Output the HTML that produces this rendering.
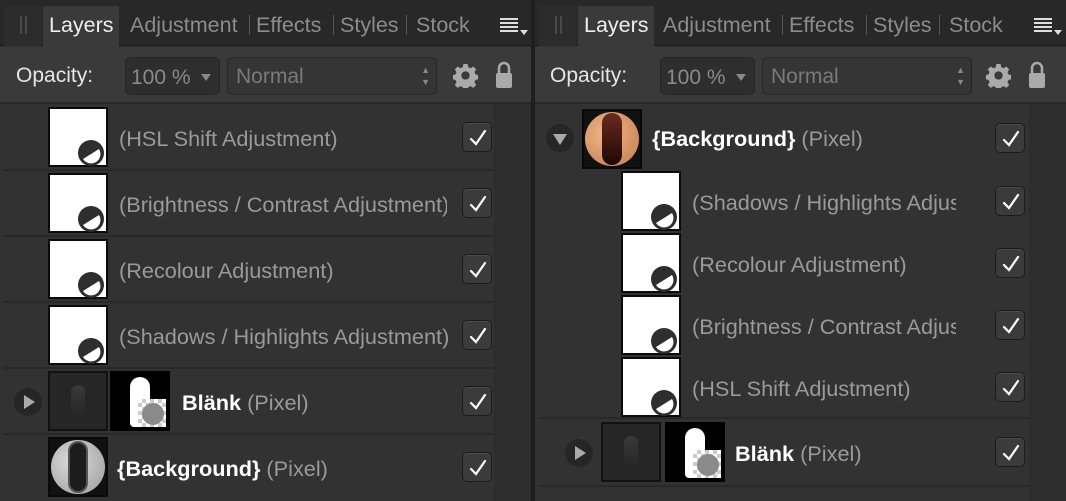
<!DOCTYPE html>
<html><head><meta charset="utf-8"><style>
*{margin:0;padding:0;box-sizing:border-box}
body{width:1066px;height:501px;background:#1e1e1e;font-family:"Liberation Sans",sans-serif;position:relative;overflow:hidden}
.panel{position:absolute;top:0;height:501px;width:531px;background:#323232}
.tabs{position:absolute;left:0;top:0;width:100%;height:46px;background:#282828;border-bottom:1px solid #1c1c1c}
.grip{position:absolute;left:4px;top:6px;width:38px;height:40px;background:#2c2c2c}
.grip:before,.grip:after{content:"";position:absolute;top:10px;width:2px;height:18px;background:#4a4a4a}
.grip:before{left:16px}.grip:after{left:21px}
.tab{position:absolute;top:13px;font-size:21.5px;color:#8c8c8c}
.active{position:absolute;left:43px;top:6px;width:76px;height:41px;background:#3a3a3a;color:#eee;font-size:21.5px;padding:7px 0 0 6px}
.sep{position:absolute;top:15px;width:1px;height:20px;background:#555}
.menu{position:absolute;top:18px;width:18px}
.menu i{display:block;height:2px;background:#ddd;margin-bottom:2px}
.tool{position:absolute;left:0;top:47px;width:100%;height:57px;background:#3a3a3a;border-bottom:2px solid #272727}
.lbl{position:absolute;left:16px;top:17px;font-size:21px;color:#e6e6e6}
.op{position:absolute;left:125px;top:10px;width:95px;height:38px;background:#2e2e2e;border:1px solid #252525;border-radius:5px;color:#8a8a8a;font-size:21px;padding:8px 0 0 5px}
.op:after{content:"";position:absolute;right:8px;top:16px;border:5px solid transparent;border-top:7px solid #888;border-bottom:0}
.bl{position:absolute;left:227px;top:10px;width:210px;height:38px;background:#353535;border:1px solid #262626;border-radius:5px;color:#7a7a7a;font-size:21px;padding:7px 0 0 8px}
.row{position:absolute;left:4px;width:490px;border-bottom:2px solid #282828}
.strip{position:absolute;left:494px;top:104px;width:37px;height:397px;background:#2d2d2d}
.th{position:absolute;width:60px;height:60px;background:#fff;border:2px solid #0a0a0a}
.th svg{position:absolute;left:27px;top:30px}
.t{position:absolute;font-size:21.7px;color:#9a9a9a;white-space:nowrap;overflow:hidden}
.b{color:#fff;font-weight:bold}
.cb{position:absolute;width:30px;height:30px;background:#3b3b3b;border:1px solid #1c1c1c;border-radius:5px;box-shadow:inset 0 1px 0 #4a4a4a}
.cb svg{position:absolute;left:5px;top:5px}
.tri{position:absolute;width:28px;height:28px;border-radius:50%;background:#262626}
.dk{position:absolute;width:60px;height:60px;background:#262626;border:2px solid #111}
.dk:after{content:"";position:absolute;left:21px;top:12px;width:14px;height:32px;border-radius:7px;background:linear-gradient(#3a3a3a,#262626)}
.mask{position:absolute;width:60px;height:60px;background:#000}
</style></head><body>

<svg width="0" height="0" style="position:absolute"><defs>
<symbol id="adj" viewBox="0 0 28 28"><circle cx="14" cy="14" r="13" fill="#2e2e2e"/><path d="M22 10 A9 9 0 0 1 6 20 Z" fill="#fff"/></symbol>
<symbol id="chk" viewBox="0 0 20 20"><path d="M3 11 L8 16 L17 3" fill="none" stroke="#fff" stroke-width="2.2" stroke-linecap="round"/></symbol>
</defs></svg>

<!-- LEFT PANEL -->
<div class="panel" style="left:0">
 <div class="tabs">
  <div class="grip"></div>
  <div class="active">Layers</div>
  <div class="tab" style="left:130px">Adjustment</div><div class="sep" style="left:249px"></div>
  <div class="tab" style="left:256px">Effects</div><div class="sep" style="left:333px"></div>
  <div class="tab" style="left:340px">Styles</div><div class="sep" style="left:406px"></div>
  <div class="tab" style="left:416px">Stock</div>
  <div class="menu" style="left:500px"><i></i><i></i><i></i><i></i></div>
  <div style="position:absolute;left:520px;top:30px;border:4px solid transparent;border-top:5px solid #ddd"></div>
 </div>
 <div class="tool">
  <div class="lbl">Opacity:</div>
  <div class="op">100 %</div>
  <div class="bl">Normal<span style="position:absolute;right:6px;top:6px;font-size:9px;color:#888;line-height:12px">▲<br>▼</span></div>
  <svg style="position:absolute;left:453px;top:16px" width="25" height="25" viewBox="0 0 24 24"><path fill="#aaa" d="M10 1h4l.6 3 2.3 1 2.6-1.7 2.8 2.8-1.7 2.6 1 2.3 3 .6v4l-3 .6-1 2.3 1.7 2.6-2.8 2.8-2.6-1.7-2.3 1-.6 3h-4l-.6-3-2.3-1-2.6 1.7-2.8-2.8 1.7-2.6-1-2.3-3-.6v-4l3-.6 1-2.3-1.7-2.6 2.8-2.8 2.6 1.7 2.3-1z"/><circle cx="12" cy="12" r="4" fill="#3a3a3a"/></svg>
  <svg style="position:absolute;left:494px;top:14px" width="20" height="28" viewBox="0 0 20 28"><path d="M5 12V7a5 5 0 0 1 10 0v5" fill="none" stroke="#aaa" stroke-width="2.5"/><rect x="2" y="12" width="16" height="15" rx="2" fill="#aaa"/></svg>
 </div>
 <div class="strip"></div>
 <div class="row" style="top:104px;height:67px"></div>
 <div class="row" style="top:171px;height:66px"></div>
 <div class="row" style="top:237px;height:66px"></div>
 <div class="row" style="top:303px;height:66px"></div>
 <div class="row" style="top:369px;height:66px"></div>

 <div class="th" style="left:48px;top:107px"><svg width="28" height="28"><use href="#adj"/></svg></div>
 <div class="t" style="left:119px;top:126px">(HSL Shift Adjustment)</div>
 <div class="th" style="left:48px;top:173px"><svg width="28" height="28"><use href="#adj"/></svg></div>
 <div class="t" style="left:119px;top:192px;width:328px">(Brightness / Contrast Adjustment)</div>
 <div class="th" style="left:48px;top:239px"><svg width="28" height="28"><use href="#adj"/></svg></div>
 <div class="t" style="left:119px;top:258px">(Recolour Adjustment)</div>
 <div class="th" style="left:48px;top:305px"><svg width="28" height="28"><use href="#adj"/></svg></div>
 <div class="t" style="left:119px;top:324px;width:331px">(Shadows / Highlights Adjustment)</div>

 <div class="tri" style="left:14px;top:388px"><div style="position:absolute;left:10px;top:7px;border:7px solid transparent;border-left:11px solid #aaa;border-right:0"></div></div>
 <div class="dk" style="left:48px;top:371px"></div>
 <div class="mask" style="left:110px;top:371px"><div style="position:absolute;left:20px;top:6px;width:20px;height:50px;background:#fff;border-radius:10px 10px 4px 4px"></div><div style="position:absolute;left:28px;top:28px;width:28px;height:28px;background:repeating-conic-gradient(#ccc 0 25%,#fff 0 50%) 0 0/8px 8px"></div><div style="position:absolute;left:32px;top:32px;width:22px;height:22px;border-radius:50%;background:#8a8a8a"></div></div>
 <div class="t" style="left:182px;top:390px"><span class="b">Blänk</span> (Pixel)</div>

 <div style="position:absolute;left:48px;top:437px;width:60px;height:60px;background:#111;border:2px solid #0a0a0a"><div style="position:absolute;left:1px;top:1px;width:54px;height:54px;border-radius:50%;background:radial-gradient(circle at 40% 40%,#ddd,#999)"></div><div style="position:absolute;left:18px;top:2px;width:20px;height:52px;border-radius:10px;background:#1c1c1c;border:2px solid #555"></div></div>
 <div class="t" style="left:117px;top:456px"><span class="b">{Background}</span> (Pixel)</div>

 <div class="cb" style="left:462px;top:122px"><svg width="20" height="20"><use href="#chk"/></svg></div>
 <div class="cb" style="left:462px;top:188px"><svg width="20" height="20"><use href="#chk"/></svg></div>
 <div class="cb" style="left:462px;top:254px"><svg width="20" height="20"><use href="#chk"/></svg></div>
 <div class="cb" style="left:462px;top:320px"><svg width="20" height="20"><use href="#chk"/></svg></div>
 <div class="cb" style="left:462px;top:386px"><svg width="20" height="20"><use href="#chk"/></svg></div>
 <div class="cb" style="left:462px;top:452px"><svg width="20" height="20"><use href="#chk"/></svg></div>
</div>

<!-- RIGHT PANEL -->
<div class="panel" style="left:535px">
 <div class="tabs">
  <div class="grip"></div>
  <div class="active">Layers</div>
  <div class="tab" style="left:128px">Adjustment</div><div class="sep" style="left:247px"></div>
  <div class="tab" style="left:254px">Effects</div><div class="sep" style="left:331px"></div>
  <div class="tab" style="left:338px">Styles</div><div class="sep" style="left:404px"></div>
  <div class="tab" style="left:414px">Stock</div>
  <div class="menu" style="left:499px"><i></i><i></i><i></i><i></i></div>
  <div style="position:absolute;left:519px;top:30px;border:4px solid transparent;border-top:5px solid #ddd"></div>
 </div>
 <div class="tool">
  <div class="lbl" style="left:15px">Opacity:</div>
  <div class="op">100 %</div>
  <div class="bl">Normal<span style="position:absolute;right:6px;top:6px;font-size:9px;color:#888;line-height:12px">▲<br>▼</span></div>
  <svg style="position:absolute;left:451px;top:16px" width="25" height="25" viewBox="0 0 24 24"><path fill="#aaa" d="M10 1h4l.6 3 2.3 1 2.6-1.7 2.8 2.8-1.7 2.6 1 2.3 3 .6v4l-3 .6-1 2.3 1.7 2.6-2.8 2.8-2.6-1.7-2.3 1-.6 3h-4l-.6-3-2.3-1-2.6 1.7-2.8-2.8 1.7-2.6-1-2.3-3-.6v-4l3-.6 1-2.3-1.7-2.6 2.8-2.8 2.6 1.7 2.3-1z"/><circle cx="12" cy="12" r="4" fill="#3a3a3a"/></svg>
  <svg style="position:absolute;left:492px;top:14px" width="20" height="28" viewBox="0 0 20 28"><path d="M5 12V7a5 5 0 0 1 10 0v5" fill="none" stroke="#aaa" stroke-width="2.5"/><rect x="2" y="12" width="16" height="15" rx="2" fill="#aaa"/></svg>
 </div>
 <div class="strip" style="left:494px"></div>
 <div class="row" style="top:104px;height:315px"></div>
 <div class="row" style="top:419px;height:68px"></div>

 <div class="tri" style="left:11px;top:124px"><div style="position:absolute;left:7px;top:10px;border:7px solid transparent;border-top:11px solid #aaa;border-bottom:0"></div></div>
 <div style="position:absolute;left:47px;top:109px;width:60px;height:60px;background:#111;border:2px solid #0a0a0a"><div style="position:absolute;left:1px;top:1px;width:54px;height:54px;border-radius:50%;background:radial-gradient(circle at 40% 40%,#f3b88a,#c07a4a)"></div><div style="position:absolute;left:18px;top:2px;width:20px;height:52px;border-radius:10px;background:linear-gradient(#6a2a1e,#1e0806)"></div></div>
 <div class="t" style="left:117px;top:126px"><span class="b">{Background}</span> (Pixel)</div>

 <div class="th" style="left:86px;top:171px"><svg width="28" height="28"><use href="#adj"/></svg></div>
 <div class="t" style="left:157px;top:190px;width:264px">(Shadows / Highlights Adjustment)</div>
 <div class="th" style="left:86px;top:233px"><svg width="28" height="28"><use href="#adj"/></svg></div>
 <div class="t" style="left:157px;top:252px">(Recolour Adjustment)</div>
 <div class="th" style="left:86px;top:295px"><svg width="28" height="28"><use href="#adj"/></svg></div>
 <div class="t" style="left:157px;top:314px;width:264px">(Brightness / Contrast Adjustment)</div>
 <div class="th" style="left:86px;top:357px"><svg width="28" height="28"><use href="#adj"/></svg></div>
 <div class="t" style="left:157px;top:376px">(HSL Shift Adjustment)</div>

 <div class="tri" style="left:30px;top:439px"><div style="position:absolute;left:10px;top:7px;border:7px solid transparent;border-left:11px solid #aaa;border-right:0"></div></div>
 <div class="dk" style="left:66px;top:422px"></div>
 <div class="mask" style="left:130px;top:422px"><div style="position:absolute;left:20px;top:6px;width:20px;height:50px;background:#fff;border-radius:10px 10px 4px 4px"></div><div style="position:absolute;left:28px;top:28px;width:28px;height:28px;background:repeating-conic-gradient(#ccc 0 25%,#fff 0 50%) 0 0/8px 8px"></div><div style="position:absolute;left:32px;top:32px;width:22px;height:22px;border-radius:50%;background:#8a8a8a"></div></div>
 <div class="t" style="left:200px;top:441px"><span class="b">Blänk</span> (Pixel)</div>

 <div class="cb" style="left:460px;top:123px"><svg width="20" height="20"><use href="#chk"/></svg></div>
 <div class="cb" style="left:460px;top:186px"><svg width="20" height="20"><use href="#chk"/></svg></div>
 <div class="cb" style="left:460px;top:248px"><svg width="20" height="20"><use href="#chk"/></svg></div>
 <div class="cb" style="left:460px;top:310px"><svg width="20" height="20"><use href="#chk"/></svg></div>
 <div class="cb" style="left:460px;top:372px"><svg width="20" height="20"><use href="#chk"/></svg></div>
 <div class="cb" style="left:460px;top:437px"><svg width="20" height="20"><use href="#chk"/></svg></div>
</div>
</body></html>
